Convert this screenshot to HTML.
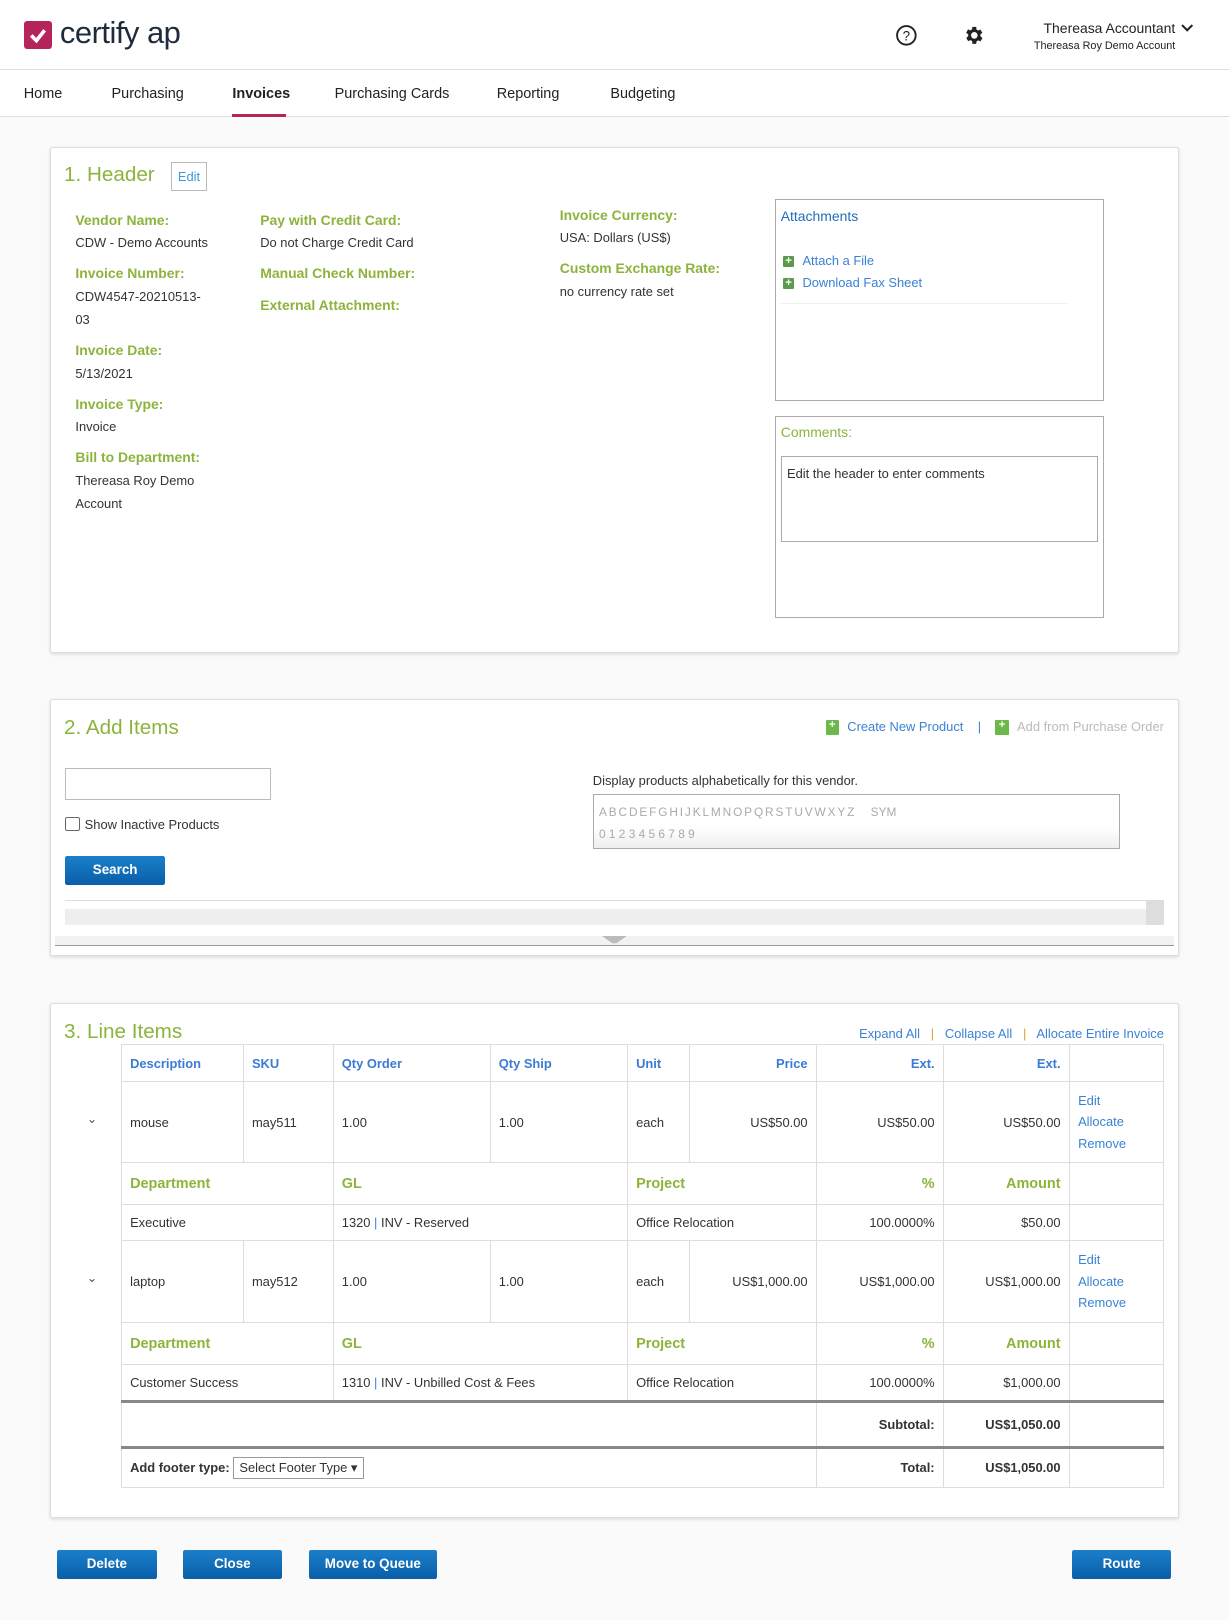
<!DOCTYPE html>
<html><head><meta charset="utf-8">
<style>
*{box-sizing:border-box;margin:0;padding:0}
html,body{width:1229px;height:1620px;overflow:hidden;background:#fafafa}
body{font-family:"Liberation Sans",sans-serif;color:#333}
#w{zoom:1.03277;width:1190px;height:1568px;position:relative}
.a{position:absolute;white-space:nowrap}
.top{position:absolute;left:0;top:0;width:1190px;height:113px;background:#fff;border-bottom:1px solid #ddd}
.hl{position:absolute;left:0;top:67px;width:1190px;height:1px;background:#ddd}
.nav{font-size:14px;color:#222;top:83px}
.card{position:absolute;left:48px;width:1094px;background:#fff;border:1px solid #ddd;border-radius:2px;box-shadow:0 1px 3px rgba(0,0,0,.12)}
.g{color:#8cb43c;font-weight:bold;font-size:13.5px}
.t{font-size:12.5px;color:#333}
.h{color:#8cb43c;font-size:20px}
.lk{color:#3a82d4;font-size:12.5px}
.btn{position:absolute;top:1501px;height:28px;background:linear-gradient(#1b7fcb,#0a5ea7);color:#fff;font-weight:bold;font-size:13px;text-align:center;line-height:28px;border-radius:2px}
table{border-collapse:collapse;position:absolute;left:117px;top:1011px;width:1009px;font-size:12.5px;table-layout:fixed}
td{border:1px solid #ddd;padding:0 8px;vertical-align:middle}
.th td{color:#3a7bd5;font-weight:bold;height:36px}
.dh td{color:#8cb43c;font-weight:bold;font-size:14px;height:41px}
.r{text-align:right}
.plus{display:inline-block;width:11px;height:11px;background:#5d9a4e;color:#fff;font-size:11px;line-height:10px;text-align:center;font-weight:bold;border-radius:1px;vertical-align:middle;margin-right:8px}
</style></head><body><div id="w">
<div class="top"></div><div class="hl"></div>
<div class="a" style="left:23px;top:20px;width:27px;height:27px;background:#b5245a;border-radius:3px"></div>
<svg class="a" style="left:23px;top:20px" width="27" height="27"><path d="M7 14 L12 19 L20 9" stroke="#fff" stroke-width="3.5" fill="none"/></svg>
<div class="a" style="left:58px;top:15px;font-size:30px;color:#1e2b3c;letter-spacing:-0.5px">certify ap</div>
<svg class="a" style="left:867px;top:23px" width="22" height="22"><circle cx="11" cy="11" r="9" stroke="#222" stroke-width="1.8" fill="none"/><text x="11" y="16" font-size="13" text-anchor="middle" font-family="Liberation Sans" fill="#222">?</text></svg>
<svg class="a" style="left:931px;top:23px" width="22" height="22" viewBox="0 0 24 24"><path fill="#222" d="M19.4 13a7.5 7.5 0 000-2l2.1-1.6-2-3.5-2.5 1a7 7 0 00-1.7-1L15 3h-4l-.4 2.7a7 7 0 00-1.7 1l-2.5-1-2 3.5L6.6 11a7.5 7.5 0 000 2l-2.1 1.6 2 3.5 2.5-1a7 7 0 001.7 1L11 21h4l.4-2.7a7 7 0 001.7-1l2.5 1 2-3.5zM13 15.5A3.5 3.5 0 1113 8.5a3.5 3.5 0 010 7z"/></svg>
<div class="a" style="right:52px;top:19px;font-size:13.5px;color:#222">Thereasa Accountant</div>
<svg class="a" style="left:1144px;top:22px" width="12" height="10"><path d="M1 2 L6 7 L11 2" stroke="#222" stroke-width="2" fill="none"/></svg>
<div class="a" style="right:52px;top:39px;font-size:10.5px;color:#222">Thereasa Roy Demo Account</div>
<div class="a nav" style="left:23px">Home</div>
<div class="a nav" style="left:108px">Purchasing</div>
<div class="a nav" style="left:225px;font-weight:bold">Invoices</div>
<div class="a" style="left:225px;top:110px;width:52px;height:3px;background:#b5245a"></div>
<div class="a nav" style="left:324px">Purchasing Cards</div>
<div class="a nav" style="left:481px">Reporting</div>
<div class="a nav" style="left:591px">Budgeting</div>

<div class="card" style="top:142px;height:490px"></div>
<div class="a h" style="left:62px;top:158px">1. Header</div>
<div class="a" style="left:166px;top:157px;width:34px;height:28px;border:1px solid #bbb;color:#3a9ad9;font-size:12.5px;line-height:28px;text-align:center">Edit</div>
<div class="a g" style="left:73px;top:205px">Vendor Name:</div>
<div class="a t" style="left:73px;top:228px">CDW - Demo Accounts</div>
<div class="a g" style="left:73px;top:257px">Invoice Number:</div>
<div class="a t" style="left:73px;top:280px">CDW4547-20210513-</div>
<div class="a t" style="left:73px;top:302px">03</div>
<div class="a g" style="left:73px;top:331px">Invoice Date:</div>
<div class="a t" style="left:73px;top:354px">5/13/2021</div>
<div class="a g" style="left:73px;top:383px">Invoice Type:</div>
<div class="a t" style="left:73px;top:406px">Invoice</div>
<div class="a g" style="left:73px;top:435px">Bill to Department:</div>
<div class="a t" style="left:73px;top:458px">Thereasa Roy Demo</div>
<div class="a t" style="left:73px;top:480px">Account</div>
<div class="a g" style="left:252px;top:205px">Pay with Credit Card:</div>
<div class="a t" style="left:252px;top:228px">Do not Charge Credit Card</div>
<div class="a g" style="left:252px;top:257px">Manual Check Number:</div>
<div class="a g" style="left:252px;top:288px">External Attachment:</div>
<div class="a g" style="left:542px;top:200px">Invoice Currency:</div>
<div class="a t" style="left:542px;top:223px">USA: Dollars (US$)</div>
<div class="a g" style="left:542px;top:252px">Custom Exchange Rate:</div>
<div class="a t" style="left:542px;top:275px">no currency rate set</div>
<div class="a" style="left:750px;top:193px;width:319px;height:195px;border:1px solid #aaa"></div>
<div class="a" style="left:756px;top:201px;color:#1f6db8;font-size:13.5px">Attachments</div>
<div class="a lk" style="left:758px;top:245px"><span class="plus">+</span>Attach a File</div>
<div class="a lk" style="left:758px;top:266px"><span class="plus">+</span>Download Fax Sheet</div>
<div class="a" style="left:756px;top:293px;width:277px;height:1px;background:#eee"></div>
<div class="a" style="left:750px;top:403px;width:319px;height:195px;border:1px solid #aaa"></div>
<div class="a g" style="left:756px;top:411px;font-weight:normal">Comments:</div>
<div class="a" style="left:756px;top:442px;width:307px;height:83px;border:1px solid #aaa"></div>
<div class="a t" style="left:762px;top:451px">Edit the header to enter comments</div>

<div class="card" style="top:677px;height:249px"></div>
<div class="a h" style="left:62px;top:693px">2. Add Items</div>
<div class="a lk" style="right:63px;top:696px"><span class="plus" style="width:13px;height:14px;background:#6cb84a">+</span><span style="color:#3a82d4">Create New Product</span>&nbsp;&nbsp;&nbsp;&nbsp;<span style="color:#3a82d4">|</span>&nbsp;&nbsp;&nbsp;&nbsp;<span class="plus" style="width:13px;height:14px;background:#6cb84a">+</span><span style="color:#bbb">Add from Purchase Order</span></div>
<div class="a" style="left:63px;top:744px;width:199px;height:31px;border:1px solid #bbb"></div>
<div class="a" style="left:63px;top:791px;width:14px;height:14px;border:1px solid #666;border-radius:2px"></div>
<div class="a t" style="left:82px;top:791px">Show Inactive Products</div>
<div class="btn" style="left:63px;top:829px;width:97px">Search</div>
<div class="a t" style="left:574px;top:748px">Display products alphabetically for this vendor.</div>
<div class="a" style="left:574px;top:769px;width:510px;height:53px;border:1px solid #aaa;background:linear-gradient(#fff 60%,#eee)"></div>
<div class="a" style="left:580px;top:779px;color:#aaa;font-size:11.5px;letter-spacing:1.8px">ABCDEFGHIJKLMNOPQRSTUVWXYZ<span style="letter-spacing:0;margin-left:14px">SYM</span></div>
<div class="a" style="left:580px;top:801px;color:#aaa;font-size:11.5px;letter-spacing:3.2px">0123456789</div>
<div class="a" style="left:63px;top:871px;width:1064px;height:1px;background:#ddd"></div>
<div class="a" style="left:63px;top:880px;width:1064px;height:16px;background:#eee"></div>
<div class="a" style="left:1110px;top:871px;width:17px;height:25px;background:#ddd"></div>
<div class="a" style="left:53px;top:906px;width:1084px;height:10px;background:#f2f2f2;border-bottom:1px solid #999"></div>
<svg class="a" style="left:583px;top:906px" width="24" height="8"><path d="M0 0 L24 0 L14 7 L10 7Z" fill="#bbb"/></svg>

<div class="card" style="top:971px;height:499px"></div>
<div class="a h" style="left:62px;top:988px">3. Line Items</div>
<div class="a lk" style="right:63px;top:993px">Expand All &nbsp;&nbsp;<span style="color:#e0a030">|</span>&nbsp;&nbsp; Collapse All &nbsp;&nbsp;<span style="color:#e0a030">|</span>&nbsp;&nbsp; Allocate Entire Invoice</div>
<div class="a" style="left:84px;top:1076px;font-size:12px;color:#555">&#8964;</div>
<div class="a" style="left:84px;top:1230px;font-size:12px;color:#555">&#8964;</div>
<table>
<colgroup><col style="width:118px"><col style="width:87px"><col style="width:152px"><col style="width:133px"><col style="width:60px"><col style="width:123px"><col style="width:123px"><col style="width:122px"><col style="width:91px"></colgroup>
<tr class="th"><td>Description</td><td>SKU</td><td>Qty Order</td><td>Qty Ship</td><td>Unit</td><td class="r">Price</td><td class="r">Ext.</td><td class="r">Ext.</td><td></td></tr>
<tr style="height:78px"><td>mouse</td><td>may511</td><td>1.00</td><td>1.00</td><td>each</td><td class="r">US$50.00</td><td class="r">US$50.00</td><td class="r">US$50.00</td><td style="color:#3a82d4;line-height:21px">Edit<br>Allocate<br>Remove</td></tr>
<tr class="dh"><td colspan="2">Department</td><td colspan="2">GL</td><td colspan="2">Project</td><td class="r">%</td><td class="r">Amount</td><td></td></tr>
<tr style="height:35px"><td colspan="2">Executive</td><td colspan="2">1320 <span style="color:#3a82d4">|</span> INV - Reserved</td><td colspan="2">Office Relocation</td><td class="r">100.0000%</td><td class="r">$50.00</td><td></td></tr>
<tr style="height:79px"><td>laptop</td><td>may512</td><td>1.00</td><td>1.00</td><td>each</td><td class="r">US$1,000.00</td><td class="r">US$1,000.00</td><td class="r">US$1,000.00</td><td style="color:#3a82d4;line-height:21px">Edit<br>Allocate<br>Remove</td></tr>
<tr class="dh"><td colspan="2">Department</td><td colspan="2">GL</td><td colspan="2">Project</td><td class="r">%</td><td class="r">Amount</td><td></td></tr>
<tr style="height:36px;border-bottom:3px solid #888"><td colspan="2">Customer Success</td><td colspan="2">1310 <span style="color:#3a82d4">|</span> INV - Unbilled Cost &amp; Fees</td><td colspan="2">Office Relocation</td><td class="r">100.0000%</td><td class="r">$1,000.00</td><td></td></tr>
<tr style="height:44px;border-bottom:3px solid #888"><td colspan="6"></td><td class="r" style="font-weight:bold">Subtotal:</td><td class="r" style="font-weight:bold">US$1,050.00</td><td></td></tr>
<tr style="height:39px"><td colspan="6"><b>Add footer type:</b> <span style="display:inline-block;border:1px solid #999;padding:2px 5px;font-size:12.5px">Select Footer Type &#9662;</span></td><td class="r" style="font-weight:bold">Total:</td><td class="r" style="font-weight:bold">US$1,050.00</td><td></td></tr>
</table>

<div class="btn" style="left:55px;width:97px">Delete</div>
<div class="btn" style="left:177px;width:96px">Close</div>
<div class="btn" style="left:299px;width:124px">Move to Queue</div>
<div class="btn" style="left:1038px;width:96px">Route</div>
</div></body></html>
